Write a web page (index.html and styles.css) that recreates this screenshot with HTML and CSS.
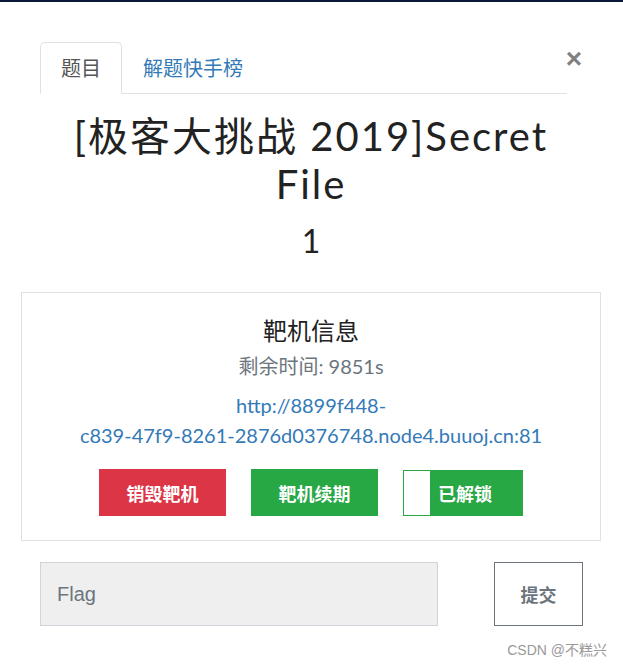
FILE: index.html
```html
<!DOCTYPE html>
<html lang="zh-CN">
<head>
  <meta charset="UTF-8">
  <meta name="viewport" content="width=device-width, initial-scale=1">
  <title>[极客大挑战 2019]Secret File</title>
  <link rel="stylesheet" href="styles.css">
</head>
<body>
  <div class="topbar"></div>
  <div class="modal">
    <div class="modal-head">
      <ul class="tabs">
        <li class="tab active">题目</li>
        <li class="tab"><a href="#">解题快手榜</a></li>
      </ul>
      <button type="button" class="close">&times;</button>
    </div>

    <h1 class="title">[极客大挑战 2019]Secret File</h1>
    <h2 class="score">1</h2>

    <div class="card">
      <h3>靶机信息</h3>
      <p class="remain">剩余时间: 9851s</p>
      <a class="url" href="#">http://8899f448-<span class="nw">c839-47f9-8261-2876d0376748.node4.buuoj.cn:81</span></a>
      <div class="actions">
        <button type="button" class="btn btn-red">销毁靶机</button>
        <button type="button" class="btn btn-green">靶机续期</button>
        <button type="button" class="btn btn-unlock"><span class="knob"></span><span class="lbl">已解锁</span></button>
      </div>
    </div>

    <form class="flag-row" onsubmit="return false">
      <input type="text" placeholder="Flag">
      <button type="submit" class="submit">提交</button>
    </form>

    <div class="watermark">CSDN @不糕兴</div>
  </div>
</body>
</html>
```

FILE: styles.css
```css
body { margin: 0; background: #fff; font-family: 'Lato', 'Noto Sans CJK SC', sans-serif; color: #212529; }
.topbar { height: 2px; background: #0b1838; }
.modal { padding: 40px 22px 0 21px; }

.modal-head { display: flex; align-items: flex-start; margin: 0 18px 0 19px; }
.tabs { flex: 1; display: flex; list-style: none; margin: 0; padding: 0; border-bottom: 1px solid #dee2e6; }
.tab { font-size: 20px; line-height: 30px; padding: 10px 20px; border: 1px solid transparent; border-top-left-radius: 5px; border-top-right-radius: 5px; margin-bottom: -1px; color: #555; }
.tab.active { border-color: #dee2e6 #dee2e6 #fff; background: #fff; }
.tab a { color: #337ab7; text-decoration: none; }
.close { background: none; border: none; padding: 0; margin: 7px 0 0 -2px; width: 18px; font-family: 'Liberation Sans', sans-serif; font-size: 28px; line-height: 20px; font-weight: bold; color: #808080; cursor: pointer; }

.title { margin: 18px 20px 0; font-family: 'Lato', 'Noto Sans CJK SC', sans-serif; font-weight: 400; font-size: 40px; line-height: 48px; letter-spacing: 2px; text-align: center; color: #222; }
.score { margin: 13px 0 0; font-weight: 400; font-size: 32px; line-height: 40px; text-align: center; color: #222; }

.card { margin-top: 31px; border: 1px solid #dee2e6; padding: 20px 20px 24px; text-align: center; }
.card h3 { margin: 0; font-size: 24px; line-height: 36px; font-weight: 400; color: #222; }
.remain { margin: 2px 0 0; font-size: 20px; line-height: 30px; color: #6c757d; }
.url { display: block; margin-top: 9px; font-size: 20px; line-height: 30px; color: #337ab7; text-decoration: none; }
.nw { white-space: nowrap; }
.actions { display: flex; justify-content: center; gap: 25px; margin-top: 19px; }
.btn { height: 47px; border: none; color: #fff; font-family: 'Noto Sans CJK SC', sans-serif; font-size: 18px; font-weight: bold; cursor: pointer; }
.btn-red { width: 127px; background: #dc3545; }
.btn-green { width: 127px; background: #28a745; }
.btn-unlock { width: 120px; height: 46px; margin-top: 1px; padding: 0; display: flex; align-items: stretch; background: #28a745; border: 1px solid #28a745; }
.knob { width: 26px; background: #fff; }
.lbl { align-self: center; padding-left: 8px; }

.flag-row { display: flex; justify-content: space-between; margin: 21px 18px 0 19px; }
.flag-row input { width: 398px; height: 64px; box-sizing: border-box; padding: 0 16px; background: #efefef; border: 1px solid #ced4da; font-family: 'Liberation Sans', sans-serif; font-size: 20px; color: #495057; }
.flag-row input::placeholder { color: #6c757d; }
.submit { width: 89px; height: 64px; background: #fff; border: 1px solid #6c757d; color: #6c757d; font-family: 'Noto Sans CJK SC', sans-serif; font-size: 18px; font-weight: bold; cursor: pointer; }

.watermark { margin: 15px -6px 0 0; text-align: right; font-family: 'Liberation Sans', 'Noto Sans CJK SC', sans-serif; font-size: 14px; line-height: 18px; color: #999; }
```
